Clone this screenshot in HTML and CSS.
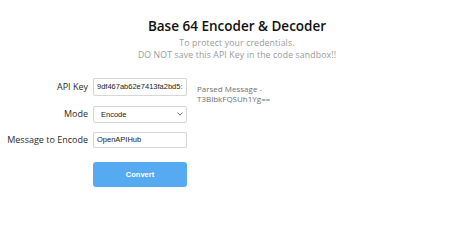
FILE: index.html
```html
<!DOCTYPE html>
<html>
<head>
<meta charset="utf-8">
<link rel="stylesheet" href="styles.css">
</head>
<body>
<div class="page">
  <h1 class="title">Base 64 Encoder &amp; Decoder</h1>
  <p class="note"><span class="note-line">To protect your credentials.</span><span class="note-line">DO NOT save this API Key in the code sandbox!!</span></p>
  <div class="form">
    <label class="label">API Key</label>
    <input class="field" type="text" value="9df467ab62e7413fa2bd5:">
    <div class="result">Parsed Message -<br>T3BlbkFQSUh1Yg==</div>
    <label class="label">Mode</label>
    <div class="select-wrap">
      <select class="field select"><option>Encode</option></select>
      <svg class="chevron" width="6" height="4" viewBox="0 0 6 4"><path d="M0.5 0.6 L3 3.1 L5.5 0.6" fill="none" stroke="#555" stroke-width="0.9"/></svg>
    </div>
    <label class="label">Message to Encode</label>
    <input class="field" type="text" value="OpenAPIHub">
    <button class="button">Convert</button>
  </div>
</div>
</body>
</html>
```
FILE: styles.css
```css
html, body {
  margin: 0;
  padding: 0;
  background: #ffffff;
}
.page {
  width: 474px;
  height: 210px;
  font-family: "Open Sans", sans-serif;
  color: #1a1a1a;
}
.title {
  margin: 0;
  padding-top: 16px;
  font-size: 13.5px;
  line-height: 20px;
  font-weight: 600;
  text-align: center;
  color: #111;
}
.note {
  margin: 2px 0 0 0;
  display: flex;
  flex-direction: column;
  align-items: center;
  font-size: 8.7px;
  letter-spacing: 0.14px;
  line-height: 11.9px;
  color: #9a9a9a;
}
.note-line {
  display: block;
  height: 11.9px;
}
.form {
  margin: 16px 0 0 7px;
  display: grid;
  grid-template-columns: 81px 94px 1fr;
  grid-template-rows: 18px 18px 16px 30px;
  column-gap: 5px;
  row-gap: 9px;
  align-items: center;
}
.label {
  text-align: right;
  font-size: 9px;
  color: #2a2a2a;
  white-space: nowrap;
}
.field {
  display: block;
  box-sizing: border-box;
  width: 94px;
  height: 100%;
  margin: 0;
  padding: 0 3px;
  border: 1px solid #d6d6d6;
  border-radius: 2px;
  background: #fff;
  font-family: "Liberation Sans", Arial, sans-serif;
  font-size: 7.5px;
  color: #222;
  outline: none;
}
.select-wrap {
  position: relative;
  align-self: end;
  height: 17px;
}
.select {
  appearance: none;
  -webkit-appearance: none;
  height: 17px;
  padding-left: 7px;
}
.chevron {
  position: absolute;
  right: 4px;
  top: 6px;
}
.result {
  grid-row: 1 / span 2;
  grid-column: 3;
  align-self: start;
  padding: 6px 0 0 5px;
  font-size: 8px;
  line-height: 10.5px;
  color: #707070;
}
.button {
  grid-column: 2;
  align-self: end;
  box-sizing: border-box;
  width: 94px;
  height: 25px;
  margin: 0;
  border: none;
  border-radius: 3px;
  background: #56aaf1;
  color: #fff;
  font-family: "Liberation Sans", Arial, sans-serif;
  font-weight: 700;
  font-size: 7.5px;
}
```
